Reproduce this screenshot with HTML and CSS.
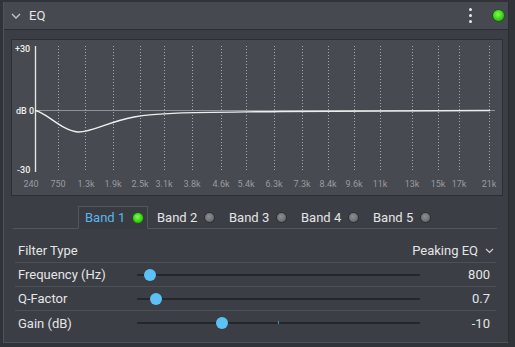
FILE: index.html
```html
<!DOCTYPE html>
<html lang="en">
<head>
  <meta charset="UTF-8">
  <title>EQ</title>
  <link rel="stylesheet" href="styles.css">
</head>
<body>
  <div class="panel">
    <div class="header">
      <svg class="chev" width="10" height="6" viewBox="0 0 10 6"><path d="M1 1 L5 5 L9 1" fill="none" stroke="#c4c6c9" stroke-width="1.3"/></svg>
      <span class="title">EQ</span>
      <span class="dots"><i></i><i></i><i></i></span>
      <span class="led on big"></span>
    </div>

    <div class="graph">
      <svg width="490" height="155" viewBox="0 0 490 155">
        <g stroke="#a3a6ab" stroke-width="1" stroke-dasharray="1 2">
          <line x1="46.5" y1="6" x2="46.5" y2="132"/>
          <line x1="73.5" y1="6" x2="73.5" y2="132"/>
          <line x1="101.5" y1="6" x2="101.5" y2="132"/>
          <line x1="128.5" y1="6" x2="128.5" y2="132"/>
          <line x1="152.5" y1="6" x2="152.5" y2="132"/>
          <line x1="180.5" y1="6" x2="180.5" y2="132"/>
          <line x1="209.5" y1="6" x2="209.5" y2="132"/>
          <line x1="234.5" y1="6" x2="234.5" y2="132"/>
          <line x1="262.5" y1="6" x2="262.5" y2="132"/>
          <line x1="290.5" y1="6" x2="290.5" y2="132"/>
          <line x1="316.5" y1="6" x2="316.5" y2="132"/>
          <line x1="342.5" y1="6" x2="342.5" y2="132"/>
          <line x1="368.5" y1="6" x2="368.5" y2="132"/>
          <line x1="400.5" y1="6" x2="400.5" y2="132"/>
          <line x1="426.5" y1="6" x2="426.5" y2="132"/>
          <line x1="447.5" y1="6" x2="447.5" y2="132"/>
          <line x1="477.5" y1="6" x2="477.5" y2="132"/>
        </g>
        <line x1="23" y1="70.5" x2="483" y2="70.5" stroke="#8f9297" stroke-width="1"/>
        <line x1="23.5" y1="6" x2="23.5" y2="132" stroke="#e2e3e5" stroke-width="1.4"/>
        <path d="M23 70.5 C34 72, 50 91, 66 92 C80 92.5, 95 82, 122 77 S 190 72.5, 270 71.5 L 478 70.5" fill="none" stroke="#eeeeee" stroke-width="1.4"/>
        <g class="axis">
          <text x="3" y="12">+30</text>
          <text x="22" y="74" text-anchor="end">dB 0</text>
          <text x="5" y="133">-30</text>
        </g>
        <g class="freq" text-anchor="middle">
          <text x="19" y="147">240</text>
          <text x="46" y="147">750</text>
          <text x="74" y="147">1.3k</text>
          <text x="101" y="147">1.9k</text>
          <text x="128" y="147">2.5k</text>
          <text x="152" y="147">3.1k</text>
          <text x="180" y="147">3.8k</text>
          <text x="209" y="147">4.6k</text>
          <text x="234" y="147">5.4k</text>
          <text x="262" y="147">6.3k</text>
          <text x="290" y="147">7.3k</text>
          <text x="316" y="147">8.4k</text>
          <text x="342" y="147">9.6k</text>
          <text x="368" y="147">11k</text>
          <text x="400" y="147">13k</text>
          <text x="426" y="147">15k</text>
          <text x="447" y="147">17k</text>
          <text x="477" y="147">21k</text>
        </g>
      </svg>
    </div>

    <div class="tabs">
      <div class="tab active">Band 1 <span class="led on"></span></div>
      <div class="tab">Band 2 <span class="led"></span></div>
      <div class="tab">Band 3 <span class="led"></span></div>
      <div class="tab">Band 4 <span class="led"></span></div>
      <div class="tab">Band 5 <span class="led"></span></div>
    </div>

    <div class="rows">
      <div class="row">
        <span class="label">Filter Type</span>
        <span class="select">Peaking EQ
          <svg width="9" height="6" viewBox="0 0 9 6"><path d="M1 1 L4.5 4.5 L8 1" fill="none" stroke="#d0d2d5" stroke-width="1.2"/></svg>
        </span>
      </div>
      <div class="row">
        <span class="label">Frequency (Hz)</span>
        <div class="slider"><span class="thumb" style="left: 13px"></span></div>
        <span class="value">800</span>
      </div>
      <div class="row">
        <span class="label">Q-Factor</span>
        <div class="slider"><span class="thumb" style="left: 19px"></span></div>
        <span class="value">0.7</span>
      </div>
      <div class="row">
        <span class="label">Gain (dB)</span>
        <div class="slider"><span class="mark"></span><span class="thumb" style="left: 85px"></span></div>
        <span class="value">-10</span>
      </div>
    </div>
  </div>
</body>
</html>
```

FILE: styles.css
```css
body {
  margin: 0;
  padding: 2px 6px 4px 3px;
  background-color: #303338;
  font-family: Roboto, 'Liberation Sans', sans-serif;
  color: #e4e5e7;
}

.panel {
  height: 341px;
  box-sizing: border-box;
  background-color: #3b3e44;
  border-left: 1px solid #50535a;
  border-right: 1px solid #2a2c30;
  border-bottom: 1px solid #50535a;
}

.header {
  height: 28px;
  display: flex;
  align-items: center;
  padding: 0 3px 0 7px;
  background-color: #46494f;
  border-bottom: 1px solid #2b2d32;
  box-sizing: border-box;
}

.chev {
  margin-right: 8px;
  margin-top: 1px;
}

.title {
  font-size: 13px;
  flex: 1;
}

.dots {
  display: flex;
  flex-direction: column;
  gap: 3px;
  margin-right: 20px;
}

.dots i {
  width: 3px;
  height: 3px;
  border-radius: 50%;
  background: #e8e8e8;
}

.led {
  display: inline-block;
  width: 9px;
  height: 9px;
  border-radius: 50%;
  background: radial-gradient(circle at 45% 40%, #8d8f93, #5b5d61);
  border: 1px solid #2c2e31;
}

.led.on {
  background: radial-gradient(circle at 45% 40%, #7dff4a, #2cc012 70%, #1f8d0c);
  border-color: #1e5a12;
}

.led.big {
  width: 11px;
  height: 11px;
}

.graph {
  margin: 10px 0 0 8px;
  width: 490px;
  height: 155px;
  box-sizing: border-box;
  background-color: #474a51;
  outline: 1px solid #2c2e33;
}

.graph svg {
  display: block;
}

.axis text {
  font-size: 9px;
  fill: #eeeeee;
  font-weight: 500;
}

.freq text {
  font-size: 9px;
  fill: #999ca1;
}

.tabs {
  display: flex;
  margin: 11px 11px 0 9px;
  padding-left: 65px;
  height: 23px;
  border-bottom: 1px solid #53565c;
  box-sizing: border-box;
}

.tab {
  width: 72px;
  display: flex;
  align-items: center;
  gap: 7px;
  padding-left: 7px;
  box-sizing: border-box;
  font-size: 13px;
}

.tab.active {
  width: 70px;
  margin-right: 2px;
  color: #5ab6ea;
  background-color: #383b41;
  border: 1px solid #53565c;
  border-bottom: 1px solid #383b41;
  margin-bottom: -1px;
  padding-left: 6px;
}

.tab.active .led {
  width: 10px;
  height: 10px;
}

.rows {
  margin: 10px 12px 0 11px;
}

.row {
  height: 24px;
  box-sizing: border-box;
  display: flex;
  align-items: center;
  padding: 0 6px 0 3px;
  border-bottom: 1px solid #4c4f55;
  font-size: 13px;
}

.row:last-child {
  border-bottom: none;
}

.label {
  width: 119px;
}

.select {
  margin-left: auto;
  margin-right: -4px;
  display: flex;
  align-items: center;
  gap: 7px;
}

.slider {
  position: relative;
  width: 283px;
  height: 2px;
  background-color: #25272b;
}

.thumb {
  position: absolute;
  top: -5px;
  width: 12px;
  height: 12px;
  margin-left: -6px;
  border-radius: 50%;
  background-color: #5cc1f5;
}

.mark {
  position: absolute;
  left: 141px;
  top: -1px;
  width: 1px;
  height: 3px;
  background-color: #4b8fb8;
}

.value {
  margin-left: auto;
}
```
